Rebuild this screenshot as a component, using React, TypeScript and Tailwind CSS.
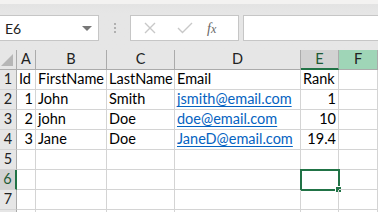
import React from "react";

const cols = ["A", "B", "C", "D", "E", "F"];

type Cell = { v: string; right?: boolean; link?: boolean };

const rows: Cell[][] = [
  [{ v: "Id" }, { v: "FirstName" }, { v: "LastName" }, { v: "Email" }, { v: "Rank" }, { v: "" }],
  [{ v: "1", right: true }, { v: "John" }, { v: "Smith" }, { v: "jsmith@email.com", link: true }, { v: "1", right: true }, { v: "" }],
  [{ v: "2", right: true }, { v: "john" }, { v: "Doe" }, { v: "doe@email.com", link: true }, { v: "10", right: true }, { v: "" }],
  [{ v: "3", right: true }, { v: "Jane" }, { v: "Doe" }, { v: "JaneD@email.com", link: true }, { v: "19.4", right: true }, { v: "" }],
  [{ v: "" }, { v: "" }, { v: "" }, { v: "" }, { v: "" }, { v: "" }],
  [{ v: "" }, { v: "" }, { v: "" }, { v: "" }, { v: "" }, { v: "" }],
  [{ v: "" }, { v: "" }, { v: "" }, { v: "" }, { v: "" }, { v: "" }],
  [{ v: "" }, { v: "" }, { v: "" }, { v: "" }, { v: "" }, { v: "" }],
];

export default function App() {
  return (
    <div className="h-[212px] w-[378px] overflow-hidden bg-white" style={{ fontFamily: "Lato, 'Liberation Sans', sans-serif" }}>
      <div className="h-[4px] bg-[#f3f2f1]" />
      <div className="h-[46px] bg-gradient-to-b from-[#e3e3e3] to-[#e6e6e6] to-[20%] pt-[11px]">
        <div className="flex h-[26px] items-stretch">
          <div className="relative flex w-[99px] items-center border border-l-0 border-[#c6c6c6] bg-white pl-[5px] text-[14px] text-[#222]">
            E6
            <span className="absolute right-[6px] top-[10px] h-0 w-0 border-x-[5px] border-t-[5px] border-x-transparent border-t-[#777]" />
          </div>
          <div className="flex w-[31px] flex-col items-center justify-center gap-[2px]">
            <span className="h-[2px] w-[2px] bg-[#b0b0b0]" />
            <span className="h-[2px] w-[2px] bg-[#b0b0b0]" />
            <span className="h-[2px] w-[2px] bg-[#b0b0b0]" />
          </div>
          <div className="flex w-[109px] items-center border border-[#c6c6c6] bg-white">
            <svg width="14" height="14" viewBox="0 0 14 14" className="ml-[12px]">
              <path d="M2 2 L12 12 M12 2 L2 12" stroke="#c8c8c8" strokeWidth="1.4" />
            </svg>
            <svg width="16" height="14" viewBox="0 0 16 14" className="ml-[20px]">
              <path d="M1 7 L5.5 11.5 L15 2" stroke="#c8c8c8" strokeWidth="1.4" fill="none" />
            </svg>
            <span className="ml-[14px] text-[14px] italic text-[#666]" style={{ fontFamily: "'Liberation Serif', serif" }}>
              f<span className="text-[12px]">x</span>
            </span>
          </div>
          <div className="ml-[4px] flex-1 border border-r-0 border-[#c6c6c6] bg-white" />
        </div>
      </div>
      <div className="grid grid-cols-[17px_19px_71px_68px_126px_38px_1fr] auto-rows-[20px] text-[14.5px] leading-none">
        <div className="relative border-b border-r border-[#ababab] bg-[#e6e6e6]">
          <span className="absolute bottom-[3px] right-[3px] h-0 w-0 border-b-[12px] border-l-[12px] border-b-[#b6b6b6] border-l-transparent" />
        </div>
        {cols.map((c) => (
          <div
            key={c}
            className={
              c === "E"
                ? "flex items-center justify-center border-b-2 border-r border-b-[#217346] border-r-[#ababab] bg-[#d2d2d2] text-[#1e5a35]"
                : c === "F"
                ? "flex items-center justify-center border-b border-r border-[#ababab] bg-[#9fd5b7] text-[#222]"
                : "flex items-center justify-center border-b border-r border-[#ababab] bg-[#e6e6e6] text-[#222]"
            }
          >
            {c}
          </div>
        ))}
        {rows.map((row, ri) => (
          <React.Fragment key={ri}>
            <div
              className={
                ri === 5
                  ? "flex items-center justify-center border-b border-r-2 border-b-[#d4d4d4] border-r-[#217346] bg-[#d2d2d2] text-[#1e5a35]"
                  : "flex items-center justify-center border-b border-r border-b-[#d4d4d4] border-r-[#ababab] bg-[#e6e6e6] text-[#222]"
              }
            >
              {ri < 7 ? ri + 1 : ""}
            </div>
            {row.map((cell, ci) => (
              <div
                key={ci}
                className={
                  "relative flex items-center overflow-visible whitespace-nowrap border-b border-r border-[#d4d4d4] px-[2px] " +
                  (cell.right ? "justify-end " : "") +
                  (cell.link ? "text-[#0563c1] underline underline-offset-2 " : "text-black ")
                }
              >
                {cell.v}
                {ri === 5 && ci === 4 ? (
                  <>
                    <span className="absolute -left-[1px] -top-[1px] h-[22px] w-[40px] border-2 border-[#217346]" />
                    <span className="absolute -bottom-[3px] -right-[3px] h-[5px] w-[5px] bg-[#217346] outline outline-1 outline-white" />
                  </>
                ) : null}
              </div>
            ))}
          </React.Fragment>
        ))}
      </div>
    </div>
  );
}
